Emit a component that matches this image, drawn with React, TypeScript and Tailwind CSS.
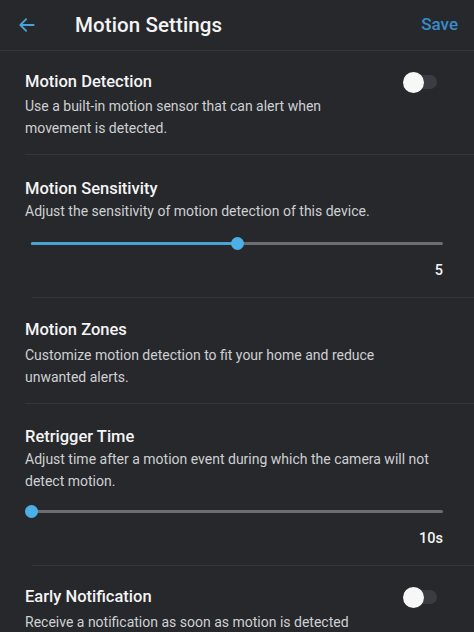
import React, { useState } from "react";

interface ToggleProps {
  on: boolean;
  onChange: (v: boolean) => void;
}

const Toggle: React.FC<ToggleProps> = ({ on, onChange }) => (
  <button
    className="relative w-[34px] h-[22px] shrink-0 flex items-center"
    onClick={() => onChange(!on)}
  >
    <span className="absolute left-[8px] right-0 h-[14px] rounded-full bg-[#3a3c41]" />
    <span
      className={`relative h-[21px] w-[21px] rounded-full bg-[#f7f7f7] ${on ? "ml-[13px]" : "ml-0"}`}
    />
  </button>
);

interface SliderProps {
  percent: number;
}

const Slider: React.FC<SliderProps> = ({ percent }) => (
  <div className="relative h-[14px] flex items-center">
    <div className="h-[3px] w-full rounded-full bg-[#6c6d70]" />
    <div
      className="absolute left-0 h-[3px] rounded-full bg-[#4aa3d6]"
      style={{ width: `${percent}%` }}
    />
    <div
      className="absolute h-[13px] w-[13px] -ml-[6.5px] rounded-full bg-[#4cb0e6]"
      style={{ left: `${percent}%` }}
    />
  </div>
);

const Divider: React.FC<{ inset?: string }> = ({ inset = "ml-[25px]" }) => (
  <div className={`h-px bg-[#34363b] ${inset}`} />
);

const App: React.FC = () => {
  const [detection, setDetection] = useState(false);
  const [early, setEarly] = useState(false);

  return (
    <div
      className="w-[474px] h-[632px] overflow-hidden bg-[#26282c] text-[#f4f4f4]"
      style={{ fontFamily: "Roboto, 'Noto Sans', sans-serif" }}
    >
      <header className="h-[51px] flex items-center border-b border-[#34363b] pl-[17px] pr-[16px]">
        <svg width="20" height="20" viewBox="0 0 24 24" fill="none" stroke="#4aa3d6" strokeWidth="2.2" strokeLinecap="round" strokeLinejoin="round">
          <path d="M20 12H5" />
          <path d="M11 5l-7 7 7 7" />
        </svg>
        <h1 className="ml-[38px] text-[20.5px] font-medium tracking-[0.1px]">Motion Settings</h1>
        <button className="ml-auto text-[17px] font-medium text-[#3a8ccc]">Save</button>
      </header>

      <section className="flex pl-[25px] pr-[37px] pt-[20px] pb-[15px]">
        <div className="flex-1">
          <h2 className="text-[16.5px] font-medium leading-[22px]">Motion Detection</h2>
          <p className="mt-[2px] text-[14px] leading-[22px] text-[#cfd0d2] w-[320px]">
            Use a built-in motion sensor that can alert when movement is detected.
          </p>
        </div>
        <Toggle on={detection} onChange={setDetection} />
      </section>
      <Divider />

      <section className="pl-[25px] pr-[31px] pt-[23px] pb-[17px]">
        <h2 className="text-[16.5px] font-medium leading-[22px]">Motion Sensitivity</h2>
        <p className="text-[14px] leading-[22px] text-[#cfd0d2]">
          Adjust the sensitivity of motion detection of this device.
        </p>
        <div className="mt-[14px] pl-[6px]">
          <Slider percent={50} />
        </div>
        <div className="mt-[12px] text-right text-[14.5px] font-medium leading-[18px]">5</div>
      </section>
      <Divider inset="ml-[32px]" />

      <section className="pl-[25px] pr-[31px] pt-[21px] pb-[15px]">
        <h2 className="text-[16.5px] font-medium leading-[22px]">Motion Zones</h2>
        <p className="mt-[3px] text-[14px] leading-[22px] text-[#cfd0d2] w-[370px]">
          Customize motion detection to fit your home and reduce unwanted alerts.
        </p>
      </section>
      <Divider />

      <section className="pl-[25px] pr-[31px] pt-[22px] pb-[17px]">
        <h2 className="text-[16.5px] font-medium leading-[22px]">Retrigger Time</h2>
        <p className="text-[14px] leading-[22px] text-[#cfd0d2] w-[420px]">
          Adjust time after a motion event during which the camera will not detect motion.
        </p>
        <div className="mt-[12px] pl-[6px]">
          <Slider percent={0} />
        </div>
        <div className="mt-[12px] text-right text-[14.5px] font-medium leading-[18px]">10s</div>
      </section>
      <Divider inset="ml-[32px]" />

      <section className="flex pl-[25px] pr-[37px] pt-[20px]">
        <div className="flex-1">
          <h2 className="text-[16.5px] font-medium leading-[22px]">Early Notification</h2>
          <p className="mt-[3px] text-[14px] leading-[22px] text-[#cfd0d2]">
            Receive a notification as soon as motion is detected
          </p>
        </div>
        <Toggle on={early} onChange={setEarly} />
      </section>
    </div>
  );
};

export default App;
